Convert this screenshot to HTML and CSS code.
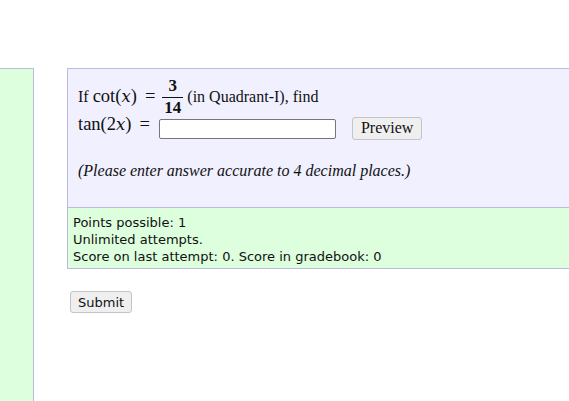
FILE: index.html
```html
<!DOCTYPE html>
<html lang="en">
<head>
    <meta charset="UTF-8">
    <title>Question</title>
    <link rel="stylesheet" href="styles.css">
</head>
<body>
<div class="page">
    <div class="sidebar"></div>
    <div class="main">
        <div class="question">
            <div class="line first">
                If <span class="m">cot(<i>x</i>)</span><span class="m eq">=</span><span class="frac"><span class="num">3</span><span class="den">14</span></span> (in Quadrant-I), find
            </div>
            <div class="line answer">
                <span class="m">tan(2<i>x</i>)</span><span class="m eq">=</span><input type="text" class="ans"><button class="preview">Preview</button>
            </div>
            <p class="note">(Please enter answer accurate to 4 decimal places.)</p>
        </div>
        <div class="info">
            Points possible: 1<br>
            Unlimited attempts.<br>
            Score on last attempt: 0. Score in gradebook: 0
        </div>
        <button class="submit">Submit</button>
    </div>
</div>
</body>
</html>
```

FILE: styles.css
```css
html, body {
    margin: 0;
    padding: 0;
    height: 100%;
    background: #fff;
}

.page {
    display: flex;
    padding-top: 68px;
    height: 100%;
    box-sizing: border-box;
}

.sidebar {
    width: 33px;
    background-color: #ddffdd;
    border-top: 1px solid #bbbbdd;
    border-right: 1px solid #bbbbdd;
}

.main {
    flex: 1;
    margin-left: 33px;
}

.question {
    background-color: #f0f0ff;
    border: 1px solid #bbbbdd;
    border-right: none;
    padding: 9px 10px 0 10px;
    font-family: "Liberation Serif", serif;
    font-size: 16px;
    color: #111;
    height: 129px;
}

.line {
    line-height: 22px;
}

.answer {
    margin-top: -2px;
}

.m {
    font-size: 18.5px;
}

.m i {
    font-family: "DejaVu Serif", serif;
    font-size: 16.5px;
}

.eq {
    margin: 0 7px 0 8px;
}

.frac {
    display: inline-block;
    vertical-align: -11px;
    text-align: center;
    font-weight: bold;
    font-size: 17px;
    line-height: 15px;
}

.frac .num, .frac .den {
    display: block;
    padding: 0 2px;
}

.frac .num {
    border-bottom: 1px solid #111;
    padding-bottom: 4px;
}

.frac .den {
    padding-top: 2px;
}

.ans {
    width: 177px;
    height: 20px;
    box-sizing: border-box;
    border: 1px solid #767676;
    border-radius: 2px;
    margin: 0 0 0 2px;
    vertical-align: -3px;
}

.preview {
    margin-left: 16px;
    font-family: "Liberation Serif", serif;
    font-size: 16px;
    height: 23px;
    padding: 0 8px;
    background: #efefef;
    border: 1px solid #c4c4c4;
    border-radius: 3px;
    color: #111;
    vertical-align: -3px;
}

.note {
    font-style: italic;
    margin: 22px 0 0 0;
    font-size: 16px;
}

.info {
    background-color: #ddffdd;
    border: 1px solid #bbbbdd;
    border-right: none;
    border-top: none;
    padding: 6px 5px 3px 5px;
    font-family: "DejaVu Sans", sans-serif;
    font-size: 13px;
    line-height: 17px;
    color: #111;
}

.submit {
    margin: 22px 0 0 3px;
    font-family: "DejaVu Sans", sans-serif;
    font-size: 13px;
    height: 22px;
    padding: 0 7px;
    background: #efefef;
    border: 1px solid #c4c4c4;
    border-radius: 3px;
    color: #111;
}
```
